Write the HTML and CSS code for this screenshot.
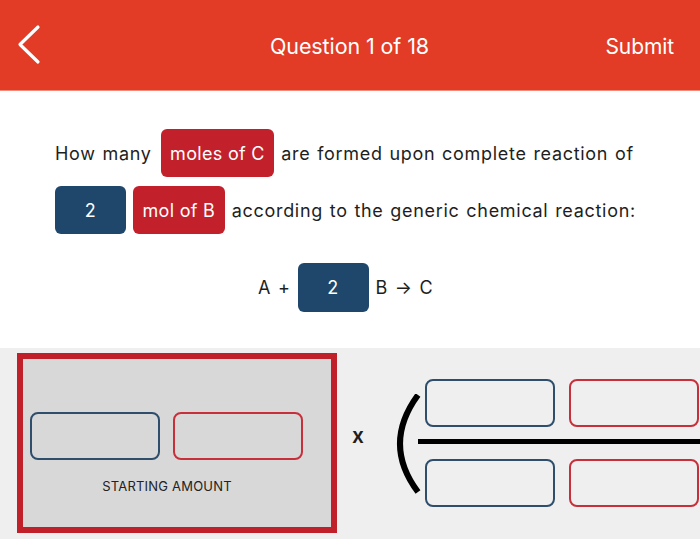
FILE: index.html
```html
<!DOCTYPE html>
<html lang="en">
<head>
    <meta charset="UTF-8">
    <meta name="viewport" content="width=device-width, initial-scale=1.0">
    <title>Question 1 of 18</title>
    <link rel="stylesheet" href="styles.css">
</head>
<body>
    <header class="top-bar">
        <a class="back" href="#" aria-label="Back">
            <svg width="26" height="42" viewBox="0 0 26 42">
                <path d="M22 3 L4 20.5 L22 38" fill="none" stroke="#fff" stroke-width="3.2" stroke-linecap="round" stroke-linejoin="round"/>
            </svg>
        </a>
        <div class="title">Question 1 of 18</div>
        <a class="submit" href="#">Submit</a>
    </header>

    <main class="question">
        <div class="line">
            <span class="word">How many</span>
            <span class="pill red">moles of C</span>
            <span class="word">are formed upon complete reaction of</span>
        </div>
        <div class="line">
            <span class="pill blue num">2</span>
            <span class="pill red">mol of B</span>
            <span class="word">according to the generic chemical reaction:</span>
        </div>
        <div class="equation">
            <span class="word">A +</span>
            <span class="pill blue eq-num">2</span>
            <span class="word">B &rarr; C</span>
        </div>
    </main>

    <section class="workspace">
        <div class="start-box">
            <div class="slots">
                <div class="slot slot-blue"></div>
                <div class="slot slot-red"></div>
            </div>
            <div class="label">STARTING AMOUNT</div>
        </div>
        <div class="times">x</div>
        <svg class="paren" width="26" height="100" viewBox="0 0 26 100">
            <path d="M23 1 Q-13 50 23 98" fill="none" stroke="#000" stroke-width="6" stroke-linecap="butt"/>
        </svg>
        <div class="fraction">
            <div class="slots">
                <div class="slot slot-blue"></div>
                <div class="slot slot-red"></div>
            </div>
            <div class="bar"></div>
            <div class="slots">
                <div class="slot slot-blue"></div>
                <div class="slot slot-red"></div>
            </div>
        </div>
    </section>
</body>
</html>
```

FILE: styles.css
```css
* {
    box-sizing: border-box;
    margin: 0;
    padding: 0;
}

body {
    width: 700px;
    height: 539px;
    overflow: hidden;
    background: #ffffff;
    font-family: 'Inter', 'Liberation Sans', sans-serif;
    color: #1e1e1e;
}

.top-bar {
    height: 91px;
    background: #e23b26;
    display: grid;
    grid-template-columns: 1fr auto 1fr;
    align-items: center;
    padding: 0 26px 0 16px;
    color: #ffffff;
    border-bottom: 1px solid #ef8a7c;
}

.back {
    display: flex;
}

.title {
    font-size: 21.5px;
    letter-spacing: -0.1px;
    padding: 2px 0 0 9px;
}

.submit {
    color: #ffffff;
    text-decoration: none;
    font-size: 21px;
    letter-spacing: -0.1px;
    text-align: right;
    padding-top: 2px;
}

.question {
    height: 257px;
    padding: 38px 0 0 55px;
}

.line {
    display: flex;
    align-items: center;
    gap: 7px;
    height: 48px;
    margin-bottom: 9px;
}

.word {
    font-size: 18px;
    letter-spacing: 0.7px;
    word-spacing: 1px;
    white-space: nowrap;
}

.pill {
    display: flex;
    align-items: center;
    justify-content: center;
    height: 48px;
    padding: 0 9.5px;
    border-radius: 6px;
    color: #ffffff;
    font-size: 18px;
    letter-spacing: 0.3px;
    white-space: nowrap;
}

.line .word:first-child {
    margin-right: 2px;
}

.red {
    background: #c2202b;
}

.blue {
    background: #1f466b;
}

.num {
    width: 71px;
}

.equation {
    display: flex;
    align-items: center;
    gap: 7px;
    height: 49px;
    margin: 29px 0 0 203px;
}

.eq-num {
    width: 71px;
    height: 49px;
}

.workspace {
    height: 191px;
    background: #efefef;
    display: flex;
    align-items: flex-start;
    padding: 5px 0 0 17px;
    overflow: hidden;
}

.start-box {
    width: 320px;
    height: 180px;
    flex-shrink: 0;
    border: 6px solid #c0202a;
    background: #d8d8d8;
    padding: 53px 0 0 7px;
}

.slots {
    display: flex;
    gap: 13px;
}

.slot {
    width: 130px;
    height: 48px;
    border-radius: 8px;
    border: 2px solid #2f4e6c;
    flex-shrink: 0;
}

.slot-red {
    border-color: #c7303b;
}

.label {
    width: 274px;
    text-align: center;
    font-size: 13px;
    letter-spacing: 0.2px;
    margin-top: 18px;
    color: #222;
}

.times {
    font-size: 21px;
    font-weight: 600;
    width: 58px;
    padding: 70px 0 0 15px;
    flex-shrink: 0;
}

.paren {
    flex-shrink: 0;
    margin-top: 41px;
}

.fraction {
    flex-shrink: 0;
    padding-top: 26px;
    margin-left: -3px;
}

.fraction .slots {
    padding-left: 7px;
    gap: 14px;
}

.bar {
    width: 300px;
    height: 5px;
    background: #000000;
    margin: 12px 0 15px;
}
```
